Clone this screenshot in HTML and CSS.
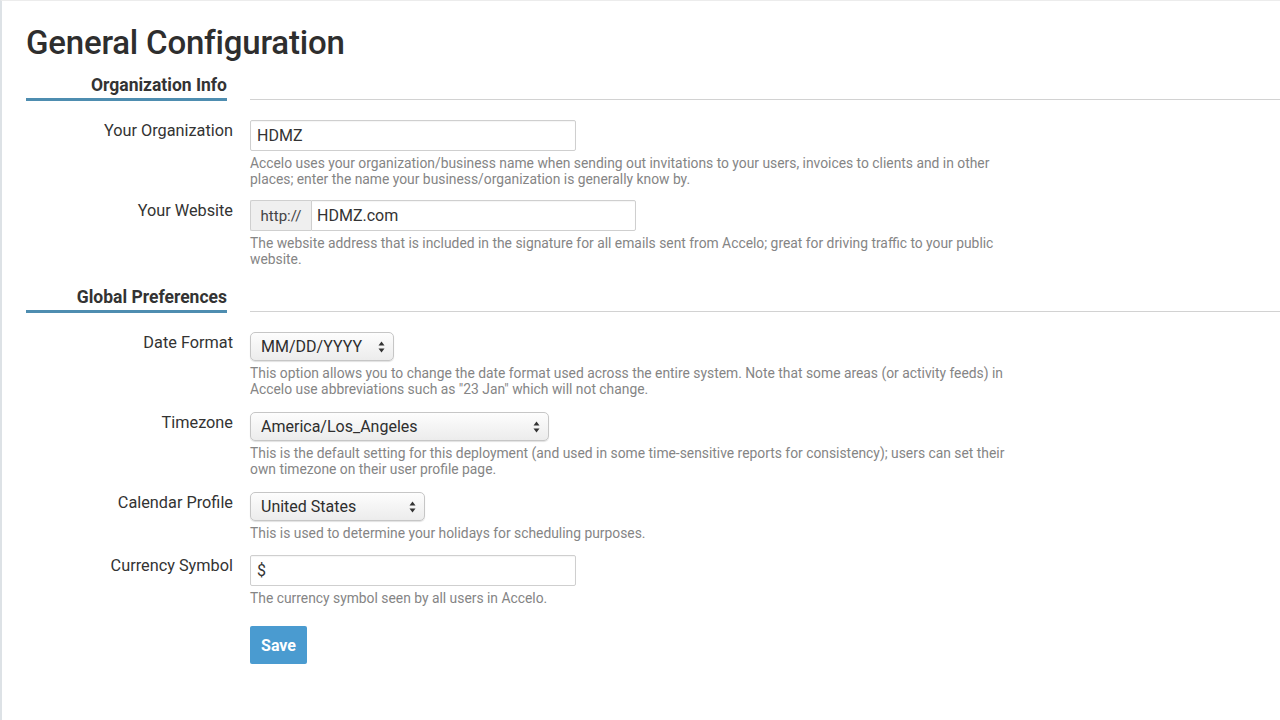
FILE: index.html
```html
<!DOCTYPE html>
<html>
<head>
<meta charset="utf-8">
<link rel="stylesheet" href="styles.css">
</head>
<body>
<div class="page">
  <h1 class="title">General Configuration</h1>

  <div class="sec-head sec1">
    <div class="sec-title">Organization Info</div>
    <div class="sec-rule"></div>
  </div>

  <div class="row">
    <label class="lbl">Your Organization</label>
    <div class="field">
      <input class="txt w326" type="text" value="HDMZ">
      <p class="help">Accelo uses your organization/business name when sending out invitations to your users, invoices to clients and in other places; enter the name your business/organization is generally know by.</p>
    </div>
  </div>

  <div class="row">
    <label class="lbl">Your Website</label>
    <div class="field">
      <div class="group">
        <span class="addon">http://</span>
        <input class="txt grp w325" type="text" value="HDMZ.com">
      </div>
      <p class="help">The website address that is included in the signature for all emails sent from Accelo; great for driving traffic to your public website.</p>
    </div>
  </div>

  <div class="sec-head sec2">
    <div class="sec-title">Global Preferences</div>
    <div class="sec-rule"></div>
  </div>

  <div class="row row-sel">
    <label class="lbl">Date Format</label>
    <div class="field">
      <span class="sel w144">
        <select><option>MM/DD/YYYY</option></select>
        <svg class="arr" width="7" height="12" viewBox="0 0 7 12"><path d="M3.5 0.5 L6.5 4.5 H0.5 Z M3.5 11.5 L6.5 7.5 H0.5 Z" fill="#333"/></svg>
      </span>
      <p class="help">This option allows you to change the date format used across the entire system. Note that some areas (or activity feeds) in Accelo use abbreviations such as "23 Jan" which will not change.</p>
    </div>
  </div>

  <div class="row row-sel">
    <label class="lbl">Timezone</label>
    <div class="field">
      <span class="sel w299">
        <select><option>America/Los_Angeles</option></select>
        <svg class="arr" width="7" height="12" viewBox="0 0 7 12"><path d="M3.5 0.5 L6.5 4.5 H0.5 Z M3.5 11.5 L6.5 7.5 H0.5 Z" fill="#333"/></svg>
      </span>
      <p class="help">This is the default setting for this deployment (and used in some time-sensitive reports for consistency); users can set their own timezone on their user profile page.</p>
    </div>
  </div>

  <div class="row row-sel2">
    <label class="lbl">Calendar Profile</label>
    <div class="field">
      <span class="sel w175">
        <select><option>United States</option></select>
        <svg class="arr" width="7" height="12" viewBox="0 0 7 12"><path d="M3.5 0.5 L6.5 4.5 H0.5 Z M3.5 11.5 L6.5 7.5 H0.5 Z" fill="#333"/></svg>
      </span>
      <p class="help">This is used to determine your holidays for scheduling purposes.</p>
    </div>
  </div>

  <div class="row">
    <label class="lbl">Currency Symbol</label>
    <div class="field">
      <input class="txt w326" type="text" value="$">
      <p class="help">The currency symbol seen by all users in Accelo.</p>
    </div>
  </div>

  <div class="row actions">
    <div class="lbl"></div>
    <div class="field">
      <button class="btn" type="button">Save</button>
    </div>
  </div>
</div>
</body>
</html>
```

FILE: styles.css
```css
* { box-sizing: border-box; }
html, body {
  margin: 0;
  padding: 0;
  background: #fff;
}
body {
  font-family: Roboto, "Liberation Sans", sans-serif;
  color: #333;
  border-left: 2px solid #dde2e6;
  border-top: 1px solid #ececec;
  min-height: 720px;
}
.page {
  padding: 22px 0 0 24px;
}
.title {
  margin: 0;
  font-size: 33px;
  line-height: 40px;
  font-weight: 500;
  color: #2e2e2e;
  letter-spacing: -0.2px;
}
.sec-head {
  display: flex;
  align-items: flex-end;
}
.sec1 { margin-top: 12px; margin-bottom: 19px; }
.sec2 { margin-top: 20px; margin-bottom: 19px; }
.sec-title {
  width: 201px;
  text-align: right;
  font-size: 17.5px;
  font-weight: 700;
  line-height: 20px;
  color: #333;
  padding-bottom: 3px;
  border-bottom: 3px solid #4e8db0;
  white-space: nowrap;
}
.sec-rule {
  flex: 1;
  margin-left: 23px;
  border-top: 1px solid #d2d2d2;
  margin-bottom: 1px;
}
.row {
  display: grid;
  grid-template-columns: 207px 1fr;
  column-gap: 17px;
  margin-bottom: 13px;
}
.row-sel { margin-bottom: 15px; }
.row-sel2 { margin-bottom: 14px; }
.lbl {
  text-align: right;
  font-size: 16.3px;
  line-height: 20px;
  padding-top: 1px;
  color: #333;
}
.field { min-width: 0; }
.txt {
  display: block;
  height: 31px;
  border: 1px solid #cfcfcf;
  border-radius: 2px;
  padding: 0 6px;
  font-family: Roboto, "Liberation Sans", sans-serif;
  font-size: 16px;
  color: #333;
  background: #fff;
  box-shadow: inset 0 1px 1px rgba(0,0,0,0.04);
  outline: none;
}
.w326 { width: 326px; }
.w325 { width: 325px; }
.group {
  display: flex;
  width: 386px;
}
.addon {
  width: 61px;
  height: 31px;
  display: flex;
  align-items: center;
  justify-content: center;
  background: #efefef;
  border: 1px solid #cfcfcf;
  border-right: none;
  border-radius: 2px 0 0 2px;
  font-size: 15px;
  color: #444;
}
.grp { border-radius: 0 2px 2px 0; padding-left: 5px; }
.help {
  margin: 4px 0 0 0;
  max-width: 760px;
  font-size: 13.85px;
  line-height: 16px;
  color: #858585;
}
.sel {
  position: relative;
  display: block;
  height: 29px;
}
.sel select {
  -webkit-appearance: none;
  appearance: none;
  width: 100%;
  height: 29px;
  border: 1px solid #c6c6c6;
  border-radius: 5px;
  padding: 0 20px 0 10px;
  font-family: Roboto, "Liberation Sans", sans-serif;
  font-size: 16px;
  color: #2e2e2e;
  background: linear-gradient(#fdfdfd, #ececec);
  box-shadow: 0 1px 1px rgba(0,0,0,0.12);
  outline: none;
}
.sel .arr {
  position: absolute;
  right: 9px;
  top: 9px;
  pointer-events: none;
}
.w144 { width: 144px; }
.w299 { width: 299px; }
.w175 { width: 175px; }
.actions { margin-top: 20px; }
.btn {
  width: 57px;
  height: 38px;
  border: none;
  border-radius: 2px;
  background: #4a9bd0;
  color: #fff;
  font-family: Roboto, "Liberation Sans", sans-serif;
  font-size: 16px;
  font-weight: 700;
  cursor: pointer;
}
```
